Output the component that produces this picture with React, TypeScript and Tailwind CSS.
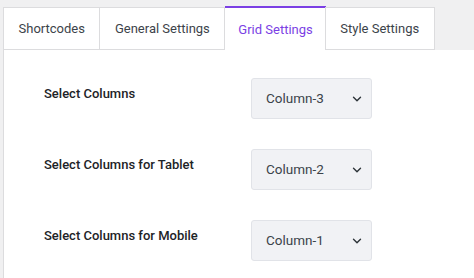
import { ChevronDown } from 'lucide-react';

const tabs = ['Shortcodes', 'General Settings', 'Grid Settings', 'Style Settings'];

const rows = [
    { label: 'Select Columns', value: 'Column-3' },
    { label: 'Select Columns for Tablet', value: 'Column-2' },
    { label: 'Select Columns for Mobile', value: 'Column-1' },
];

export default function App() {
    const active = 'Grid Settings';

    return (
        <div className="w-[474px] h-[278px] bg-[#f0f0f1] overflow-hidden font-['Roboto',sans-serif]">
            <div className="ml-[3px] flex pt-[6px]">
                {tabs.map((tab) =>
                    tab === active ? (
                        <div
                            key={tab}
                            className="h-[44px] px-[13px] flex items-center bg-white border-t-2 border-[#7b3fe4] text-[13px] text-[#7b3fe4] pt-px"
                        >
                            {tab}
                        </div>
                    ) : (
                        <div
                            key={tab}
                            className="mt-px h-[43px] px-[14.5px] flex items-center bg-white border border-[#dcdcde] -ml-px first:ml-0 text-[13px] text-[#3c434a]"
                        >
                            {tab}
                        </div>
                    )
                )}
            </div>
            <div className="ml-[3px] bg-white border-l border-[#dcdcde] h-full pl-[40px] pt-[28px] flex flex-col gap-[30px]">
                {rows.map((row) => (
                    <div key={row.label} className="flex items-start">
                        <div className="w-[207px] pt-[6px] text-[13px] font-medium text-[#1d2327]">{row.label}</div>
                        <div className="w-[121px] h-[41px] bg-[#f1f2f5] border border-[#e1e3e8] rounded-[3px] flex items-center justify-between pl-[14px] pr-[7px] text-[13.5px] text-[#3c434a]">
                            <span>{row.value}</span>
                            <ChevronDown className="w-[14px] h-[14px] text-[#2c3338]" strokeWidth={2.4} />
                        </div>
                    </div>
                ))}
            </div>
        </div>
    );
}
